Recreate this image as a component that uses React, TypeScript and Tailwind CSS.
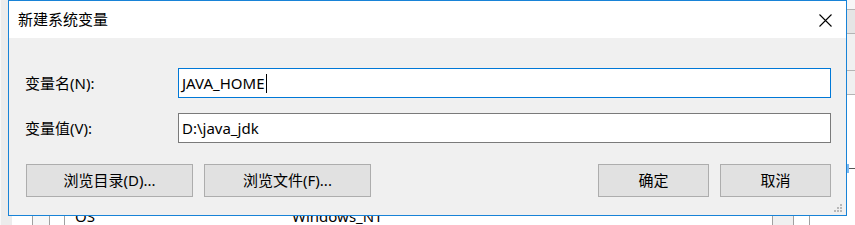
import type { ReactNode } from 'react';

const FONT = "font-['Noto_Sans','Noto_Sans_CJK_SC',sans-serif]";

function Field({ label, value, focused }: { label: string; value: string; focused?: boolean }) {
  return (
    <div className="flex items-center">
      <span className="w-[153px] shrink-0 text-[15px] leading-none text-[#000]">{label}</span>
      <div
        className={
          'flex h-[30px] w-[653px] items-center border bg-white pl-[3px] ' +
          (focused ? 'border-[#0078d7]' : 'border-[#7a7a7a]')
        }
      >
        <span className="text-[15px] leading-none text-black">{value}</span>
        {focused && <span className="ml-[1px] h-[19px] w-px bg-black" />}
      </div>
    </div>
  );
}

function Btn({ children, wide }: { children: ReactNode; wide?: boolean }) {
  return (
    <button
      type="button"
      className={
        'flex h-[33px] items-center justify-center border border-[#adadad] bg-[#e1e1e1] text-[15px] leading-none text-black ' +
        (wide ? 'w-[167px]' : 'w-[111px]')
      }
    >
      {children}
    </button>
  );
}

export default function App() {
  return (
    <div className={`flex h-[225px] w-[855px] overflow-hidden bg-white ${FONT}`}>
      {/* left edge of the window behind */}
      <div className="flex w-[8px] shrink-0 flex-col">
        <div className="flex flex-1">
          <div className="w-px bg-[#f7f7f7]" />
          <div className="flex-1 bg-[#ececec]" />
        </div>
      </div>

      <div className="flex w-[839px] shrink-0 flex-col">
        {/* dialog */}
        <div className="relative flex h-[216px] flex-col border border-[#1883d7] bg-[#f0f0f0]">
          <div className="flex h-[37px] items-center justify-between bg-white pl-[9px] pr-[14px]">
            <span className="text-[15px] leading-none text-black">新建系统变量</span>
            <svg width="13" height="13" viewBox="0 0 13 13" className="mt-[1px]">
              <path d="M0.5 0.5 L12.5 12.5 M12.5 0.5 L0.5 12.5" stroke="#000" strokeWidth="1.1" fill="none" />
            </svg>
          </div>

          <div className="flex flex-col pl-[16px] pt-[30px]">
            <div className="flex flex-col gap-[15px]">
              <Field label="变量名(N):" value="JAVA_HOME" focused />
              <Field label="变量值(V):" value="D:\java_jdk" />
            </div>
            <div className="mt-[21px] flex items-center pl-[1px] pr-[15px]">
              <div className="flex gap-[11px]">
                <Btn wide>浏览目录(D)...</Btn>
                <Btn wide>浏览文件(F)...</Btn>
              </div>
              <div className="ml-auto flex gap-[11px]">
                <Btn>确定</Btn>
                <Btn>取消</Btn>
              </div>
            </div>
          </div>

          {/* size grip */}
          <div className="absolute bottom-[3px] right-[4px] grid grid-cols-3 gap-[1px]">
            <span className="h-[2px] w-[2px]" />
            <span className="h-[2px] w-[2px]" />
            <span className="h-[2px] w-[2px] bg-[#b8b8b8]" />
            <span className="h-[2px] w-[2px]" />
            <span className="h-[2px] w-[2px] bg-[#b8b8b8]" />
            <span className="h-[2px] w-[2px] bg-[#b8b8b8]" />
            <span className="h-[2px] w-[2px] bg-[#b8b8b8]" />
            <span className="h-[2px] w-[2px] bg-[#b8b8b8]" />
            <span className="h-[2px] w-[2px] bg-[#b8b8b8]" />
          </div>
        </div>

        {/* list of the window behind, peeking out below the dialog */}
        <div className="flex h-[9px] overflow-hidden">
          <div className="w-[4px] bg-[#ececec]" />
          <div className="w-[20px]" />
          <div className="w-px bg-[#a0a0a0]" />
          <div className="w-[16px] bg-[#f7f7f7]" />
          <div className="w-px bg-[#a0a0a0]" />
          <div className="w-[14px]" />
          <div className="w-px bg-[#a0a0a0]" />
          <div className="w-[227px] pl-[10px]">
            <div className="-mt-[7px] text-[15px] leading-none text-black">OS</div>
          </div>
          <div className="w-[480px]">
            <div className="-mt-[7px] text-[15px] leading-none text-black">Windows_NT</div>
          </div>
          <div className="w-px bg-[#a0a0a0]" />
          <div className="w-[20px] bg-[#f0f0f0]" />
          <div className="w-px bg-[#a0a0a0]" />
          <div className="w-[15px]" />
          <div className="w-px bg-[#a0a0a0]" />
        </div>
      </div>

      {/* right edge of the window behind */}
      <div className="flex w-[8px] shrink-0 flex-col">
        <div className="h-[9px] bg-[#f7f7f7]" />
        <div className="h-px bg-[#b4b4b4]" />
        <div className="h-[23px] bg-[#e5e5e5]" />
        <div className="h-px bg-[#b4b4b4]" />
        <div className="h-[36px] bg-[#f0f0f0]" />
        <div className="h-px bg-[#b4b4b4]" />
        <div className="h-[23px] bg-[#f0f0f0]" />
        <div className="h-px bg-[#b4b4b4]" />
        <div className="h-[69px] bg-white" />
        <div className="flex h-[9px]">
          <div className="w-[2px] bg-[#7ab8f0]" />
          <div className="flex flex-1 flex-col justify-center">
            <div className="h-px bg-[#555]" />
          </div>
        </div>
        <div className="flex-1 bg-white" />
      </div>
    </div>
  );
}
